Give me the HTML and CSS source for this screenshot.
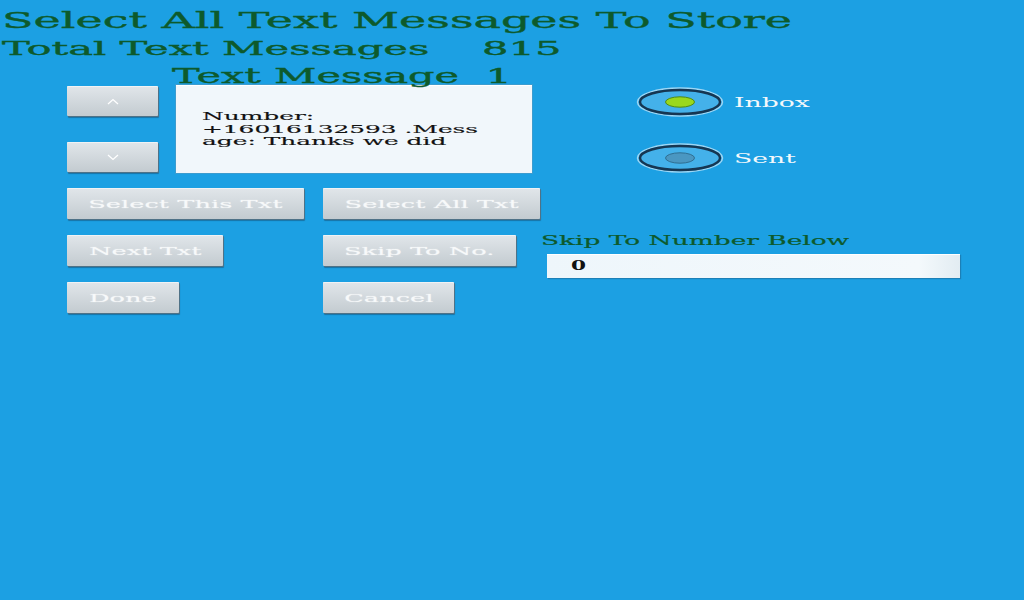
FILE: index.html
```html
<!DOCTYPE html>
<html>
<head>
<meta charset="utf-8">
<title>Select Text Messages</title>
<link rel="stylesheet" href="styles.css">
</head>
<body>
<div class="screen">
  <div class="header">
    <div class="h1"><span class="s sx-title">Select All Text Messages To Store</span></div>
    <div class="h2"><span class="s sx-total">Total Text Messages    815</span></div>
    <div class="h3"><span class="s sx-msg">Text Message  1</span></div>
  </div>

  <div class="main">
    <div class="nav-col">
      <button class="btn nav-btn" type="button" aria-label="Up">
        <svg width="12" height="7" viewBox="0 0 12 7"><polyline points="1,6 6,1.5 11,6" fill="none" stroke="#ffffff" stroke-width="1.3"/></svg>
      </button>
      <button class="btn nav-btn" type="button" aria-label="Down">
        <svg width="12" height="7" viewBox="0 0 12 7"><polyline points="1,1 6,5.5 11,1" fill="none" stroke="#ffffff" stroke-width="1.3"/></svg>
      </button>
    </div>
    <div class="msg-box">
      <div class="msg-line"><span class="s sx-body">Number:</span></div>
      <div class="msg-line"><span class="s sx-body">+16016132593 .Mess</span></div>
      <div class="msg-line"><span class="s sx-body">age: Thanks we did</span></div>
    </div>
    <div class="radio-col">
      <label class="radio">
        <svg class="radio-mark" width="88" height="30" viewBox="0 0 88 30">
          <ellipse cx="44" cy="15" rx="42.5" ry="14" fill="none" stroke="#bfe4f7" stroke-width="1.5" opacity="0.8"/>
          <ellipse cx="44" cy="15" rx="40" ry="12" fill="#44b1ea" stroke="#163652" stroke-width="2.4"/>
          <ellipse cx="44" cy="15" rx="14.5" ry="5.2" fill="#9ad81c" stroke="#4f8a16" stroke-width="1"/>
        </svg>
        <span class="s sx-radio">Inbox</span>
      </label>
      <label class="radio">
        <svg class="radio-mark" width="88" height="30" viewBox="0 0 88 30">
          <ellipse cx="44" cy="15" rx="42.5" ry="14" fill="none" stroke="#bfe4f7" stroke-width="1.5" opacity="0.8"/>
          <ellipse cx="44" cy="15" rx="40" ry="12" fill="#44b1ea" stroke="#163652" stroke-width="2.4"/>
          <ellipse cx="44" cy="15" rx="14.5" ry="5.2" fill="#4a97c2" stroke="#2f6f93" stroke-width="1"/>
        </svg>
        <span class="s sx-radio">Sent</span>
      </label>
    </div>
  </div>

  <div class="actions">
    <button class="btn w-237" type="button"><span class="s c sx-btn">Select This Txt</span></button>
    <button class="btn w-217" type="button"><span class="s c sx-btn">Select All Txt</span></button>
    <div class="spacer"></div>

    <button class="btn w-156" type="button"><span class="s c sx-btn">Next Txt</span></button>
    <button class="btn w-193" type="button"><span class="s c sx-btn">Skip To No.</span></button>
    <div class="skip">
      <div class="skip-label"><span class="s sx-label">Skip To Number Below</span></div>
      <div class="skip-input"><span class="s sx-input">0</span></div>
    </div>

    <button class="btn w-112" type="button"><span class="s c sx-btn">Done</span></button>
    <button class="btn w-131" type="button"><span class="s c sx-btn">Cancel</span></button>
    <div class="spacer"></div>
  </div>
</div>
</body>
</html>
```
FILE: styles.css
```css
html, body {
  margin: 0;
  padding: 0;
}
body {
  background: #1ca0e3;
  font-family: "DejaVu Serif", serif;
  width: 1024px;
  height: 600px;
  overflow: hidden;
}
.screen {
  width: 1024px;
  height: 600px;
}

/* stretched text */
.s {
  display: inline-block;
  white-space: pre;
  transform-origin: 0 50%;
}
.s.c {
  transform-origin: 50% 50%;
}
.sx-title { transform: scaleX(2.09); }
.sx-total { transform: scaleX(2.31); }
.sx-msg { transform: scaleX(2.07); }
.sx-body { transform: scale(2.07, 0.9); }
.sx-btn { transform: scale(2.14, 0.9); }
.sx-radio { transform: scaleX(2.05); }
.sx-label { transform: scaleX(2.03); }
.sx-input { transform: scaleX(1.8); }

/* header */
.header {
  color: #0d5a2c;
  padding-left: 2px;
  -webkit-text-stroke: 0.35px #0d5a2c;
}
.h1 {
  font-size: 22px;
  height: 36px;
  line-height: 37px;
  padding-top: 2px;
}
.h2 {
  font-size: 18px;
  height: 24px;
  line-height: 21px;
}
.h3 {
  font-size: 20px;
  height: 23px;
  line-height: 28px;
  padding-left: 170px;
}

/* main row */
.main {
  display: flex;
  height: 88px;
  padding-left: 67px;
}
.nav-col {
  display: flex;
  flex-direction: column;
  gap: 26px;
  padding-top: 1px;
}
.btn {
  display: flex;
  align-items: center;
  justify-content: center;
  height: 31px;
  margin: 0;
  padding: 0;
  border: none;
  border-radius: 1px;
  background: linear-gradient(#e1e6ea, #c3cbd0);
  box-shadow: inset 0 1px 0 rgba(255,255,255,0.5), 1px 1px 0 #4f7287, 1px 2px 1px rgba(20,60,90,0.45);
  color: #f7f9fa;
  font-family: "DejaVu Serif", serif;
  font-size: 12px;
  text-shadow: 0 0 1px rgba(255,255,255,0.6);
  overflow: visible;
}
.nav-btn {
  width: 91px;
  height: 30px;
}
.msg-box {
  width: 356px;
  height: 88px;
  margin-left: 18px;
  box-sizing: border-box;
  padding: 25px 0 0 26px;
  background: #f1f7fb;
  box-shadow: inset 0 1px 0 #ffffff, 0 0 0 1px rgba(120,150,170,0.35);
  color: #111111;
  font-size: 12px;
  -webkit-text-stroke: 0.15px #111111;
}
.msg-line {
  height: 12.5px;
  line-height: 12.5px;
}
.radio-col {
  display: flex;
  flex-direction: column;
  gap: 26px;
  padding-top: 2px;
  margin-left: 104px;
}
.radio {
  display: flex;
  align-items: center;
  gap: 10px;
  height: 30px;
  color: #f4f8fb;
  font-size: 13px;
}
.radio-mark {
  display: block;
}

/* action grid */
.actions {
  display: grid;
  grid-template-columns: 256px 218px 1fr;
  grid-template-rows: 31px 31px 31px;
  row-gap: 16px;
  margin-top: 15px;
  padding-left: 67px;
}
.w-237 { width: 237px; }
.w-217 { width: 217px; }
.w-156 { width: 156px; }
.w-193 { width: 193px; }
.w-112 { width: 112px; }
.w-131 { width: 131px; }

.skip {
  margin-top: -2px;
  align-self: start;
}
.skip-label {
  color: #0d5a2c;
  font-size: 13px;
  height: 16px;
  line-height: 16px;
  -webkit-text-stroke: 0.2px #0d5a2c;
}
.skip-input {
  width: 413px;
  height: 24px;
  margin: 5px 0 0 6px;
  box-sizing: border-box;
  padding-left: 24px;
  background: linear-gradient(90deg, #eef6fb, #f4f9fc 90%, #e2ecf2);
  box-shadow: inset 0 1px 0 #ffffff, 1px 1px 1px rgba(30,70,100,0.35);
  color: #111111;
  font-size: 12px;
  font-weight: bold;
  line-height: 24px;
}
```
